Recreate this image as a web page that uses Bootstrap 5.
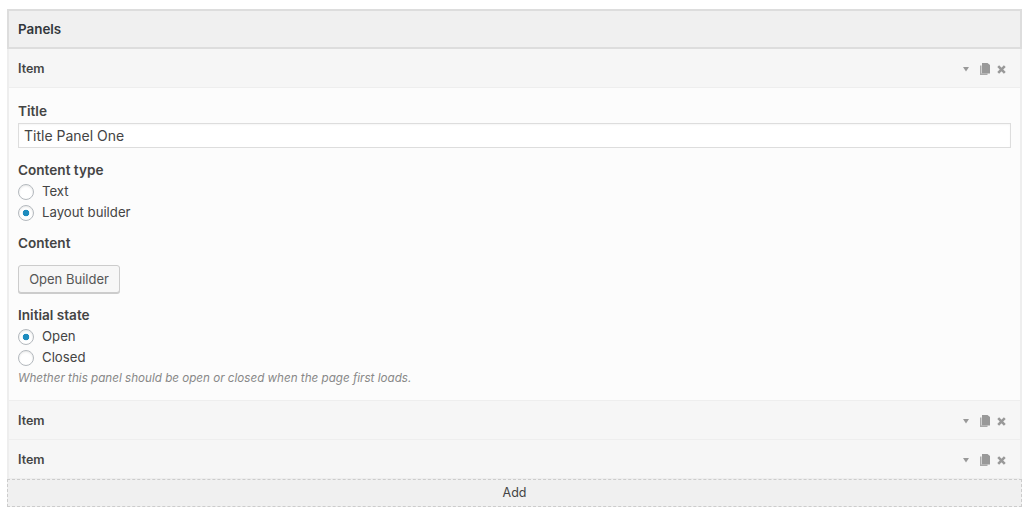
<!DOCTYPE html>
<html lang="en"><head><meta charset="utf-8">
<link rel="stylesheet" href="https://cdn.jsdelivr.net/npm/bootstrap@5.3.0/dist/css/bootstrap.min.css">
<style>
html,body{height:100%;background:#fff;overflow:hidden}
body{font-family:Inter,"Liberation Sans",sans-serif;color:#444;font-size:13px;padding:9px 5px 0 7px}
.wrap{width:1015px}
.panels-head{height:40px;background:#f0f0f0;border:2px solid #ddd;padding:1px 9px 0;font-weight:600;font-size:13.4px;color:#32373c}
.item-row{height:39px;background:#f6f6f6;border-left:2px solid #eee;border-right:2px solid #eee;border-bottom:1px solid #eee;padding:0 14px 0 9px;font-weight:600;font-size:12.5px;color:#444}
.item-lbl{padding-top:3px}
.ctrls{gap:7px;padding-top:2px}
.item-body{height:313px;background:#fcfcfc;border-left:2px solid #eee;border-right:2px solid #eee;border-bottom:1px solid #eee;padding:15px 9px 0}
.fld-label{font-weight:600;font-size:13.6px;line-height:17px;color:#444}
.txt-in{display:block;width:100%;height:25px;border:1px solid #ddd;box-shadow:inset 0 1px 2px rgba(0,0,0,.04);background:#fff;padding:0 5px;font-size:14px;color:#444;margin-top:3px;border-radius:0;outline:0;font-family:inherit}
.rad-row{height:21px;gap:8px;font-size:13.2px;color:#444}
.rad{width:16px;height:16px;border-radius:50%;border:1px solid #b4b9be;background:#fff;box-shadow:inset 0 1px 2px rgba(0,0,0,.1);flex:none}
.rad.is-on{background:radial-gradient(circle,#1e8cbe 0 3px,#fff 3.6px)}
.open-btn{height:28px;width:102px;padding:0;border:1px solid #ccc;border-radius:3px;background:#f7f7f7;box-shadow:0 1px 0 #ccc;color:#555;font-size:13px;line-height:26px;display:block}
.hint-txt{font-style:italic;font-size:11.65px;color:#888;line-height:16px}
.gap-s{margin-top:2px}
.gap-m{margin-top:14px}
.gap-l{margin-top:12px}
.gap-b{margin-top:13px}
.gap-h{margin-top:2px}
.add-bar{height:28px;background:#f0f0f0;border:1px dashed #ccc;font-size:12.5px;color:#444}
</style></head><body>
<div class="wrap">
<div class="panels-head d-flex align-items-center">Panels</div>
<div class="item-row d-flex align-items-center justify-content-between"><span class="item-lbl">Item</span>
<span class="ctrls d-flex align-items-center">
<svg width="6" height="12" viewBox="0 0 6 12" class="me-1"><path d="M0 4h6L3 8.500z" fill="#999"/></svg>
<svg width="10" height="12" viewBox="0 0 10 12"><path d="M0 2.500h1.500v8h6V12H0z" fill="#aaa"/><path d="M2 0h5.500L10 2v8.500H2z" fill="#999"/></svg>
<svg width="9" height="9" viewBox="0 0 9 9"><path d="M1.200 1.200l6.600 6.600M7.800 1.200L1.200 7.800" stroke="#999" stroke-width="2.600"/></svg>
</span></div>
<div class="item-body">
<div class="fld-label">Title</div>
<input class="txt-in" value="Title Panel One">
<div class="fld-label gap-m">Content type</div>
<div class="rad-row d-flex align-items-center gap-s"><span class="rad"></span>Text</div>
<div class="rad-row d-flex align-items-center"><span class="rad is-on"></span>Layout builder</div>
<div class="fld-label gap-l">Content</div>
<button class="open-btn gap-b" type="button">Open Builder</button>
<div class="fld-label gap-m">Initial state</div>
<div class="rad-row d-flex align-items-center gap-s"><span class="rad is-on"></span>Open</div>
<div class="rad-row d-flex align-items-center"><span class="rad"></span>Closed</div>
<div class="hint-txt gap-h">Whether this panel should be open or closed when the page first loads.</div>
</div>
<div class="item-row d-flex align-items-center justify-content-between"><span class="item-lbl">Item</span>
<span class="ctrls d-flex align-items-center">
<svg width="6" height="12" viewBox="0 0 6 12" class="me-1"><path d="M0 4h6L3 8.500z" fill="#999"/></svg>
<svg width="10" height="12" viewBox="0 0 10 12"><path d="M0 2.500h1.500v8h6V12H0z" fill="#aaa"/><path d="M2 0h5.500L10 2v8.500H2z" fill="#999"/></svg>
<svg width="9" height="9" viewBox="0 0 9 9"><path d="M1.200 1.200l6.600 6.600M7.800 1.200L1.200 7.800" stroke="#999" stroke-width="2.600"/></svg>
</span></div>
<div class="item-row d-flex align-items-center justify-content-between"><span class="item-lbl">Item</span>
<span class="ctrls d-flex align-items-center">
<svg width="6" height="12" viewBox="0 0 6 12" class="me-1"><path d="M0 4h6L3 8.500z" fill="#999"/></svg>
<svg width="10" height="12" viewBox="0 0 10 12"><path d="M0 2.500h1.500v8h6V12H0z" fill="#aaa"/><path d="M2 0h5.500L10 2v8.500H2z" fill="#999"/></svg>
<svg width="9" height="9" viewBox="0 0 9 9"><path d="M1.200 1.200l6.600 6.600M7.800 1.200L1.200 7.800" stroke="#999" stroke-width="2.600"/></svg>
</span></div>
<div class="add-bar d-flex align-items-center justify-content-center">Add</div>
</div>
</body></html>
